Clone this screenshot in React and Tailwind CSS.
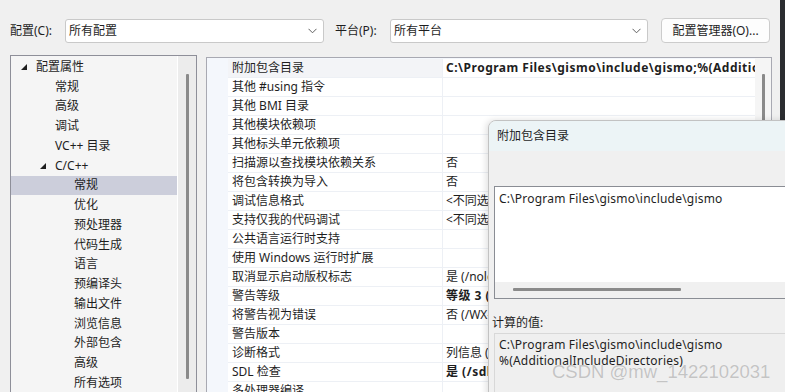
import React from "react";

const tree = [
  { label: "配置属性", level: 0, arrow: true },
  { label: "常规", level: 1 },
  { label: "高级", level: 1 },
  { label: "调试", level: 1 },
  { label: "VC++ 目录", level: 1 },
  { label: "C/C++", level: 1, arrow: true },
  { label: "常规", level: 2, selected: true },
  { label: "优化", level: 2 },
  { label: "预处理器", level: 2 },
  { label: "代码生成", level: 2 },
  { label: "语言", level: 2 },
  { label: "预编译头", level: 2 },
  { label: "输出文件", level: 2 },
  { label: "浏览信息", level: 2 },
  { label: "外部包含", level: 2 },
  { label: "高级", level: 2 },
  { label: "所有选项", level: 2 },
];

const rows = [
  { name: "附加包含目录", value: "C:\\Program Files\\gismo\\include\\gismo;%(AdditionalIncludeDirectories)", bold: true },
  { name: "其他 #using 指令", value: "" },
  { name: "其他 BMI 目录", value: "" },
  { name: "其他模块依赖项", value: "" },
  { name: "其他标头单元依赖项", value: "" },
  { name: "扫描源以查找模块依赖关系", value: "否" },
  { name: "将包含转换为导入", value: "否" },
  { name: "调试信息格式", value: "<不同选项>" },
  { name: "支持仅我的代码调试", value: "<不同选项>" },
  { name: "公共语言运行时支持", value: "" },
  { name: "使用 Windows 运行时扩展", value: "" },
  { name: "取消显示启动版权标志", value: "是 (/nologo)" },
  { name: "警告等级", value: "等级 3 (/W3)", bold: true },
  { name: "将警告视为错误", value: "否 (/WX-)" },
  { name: "警告版本", value: "" },
  { name: "诊断格式", value: "列信息 (/diagnostics:column)" },
  { name: "SDL 检查", value: "是 (/sdl)", bold: true },
  { name: "多处理器编译", value: "" },
];

const Chevron = () => (
  <svg width="9" height="6" viewBox="0 0 9 6" className="mr-[6px]">
    <polyline points="0.5,0.8 4.5,4.8 8.5,0.8" fill="none" stroke="#606060" strokeWidth="1" />
  </svg>
);

const Arrow = () => (
  <svg width="6" height="6" viewBox="0 0 6 6">
    <polygon points="6,0 6,6 0,6" fill="#1e1e1e" />
  </svg>
);

const Combo = ({ text, width }) => (
  <div
    className={`${width} h-[24px] bg-white border border-[#c9c9c9] rounded-[3px] flex items-center justify-between pl-[3px]`}
  >
    <span>{text}</span>
    <Chevron />
  </div>
);

export default function App() {
  return (
    <div className="relative w-[785px] h-[392px] overflow-hidden bg-[#f0f0f0] text-[12px] leading-[16px] text-[#1e1e1e] font-['Noto_Sans','Noto_Sans_CJK_SC',sans-serif]">
      {/* toolbar */}
      <div className="flex items-center pt-[18px] pl-[10px]">
        <span className="w-[55px]">配置(C):</span>
        <Combo text="所有配置" width="w-[259px]" />
        <span className="ml-[11px] w-[55px]">平台(P):</span>
        <Combo text="所有平台" width="w-[258px]" />
        <button className="ml-[13px] w-[109px] h-[25px] bg-[#fdfdfd] border border-[#cccccc] rounded-[4px] text-[12px]">
          配置管理器(O)...
        </button>
      </div>

      <div className="flex items-start mt-[12px] pl-[10px]">
        {/* tree */}
        <div className="w-[187px] h-[345px] shrink-0 border border-[#8e8f99] bg-[#f5f5f5] flex">
          <div className="w-[166px] shrink-0 pt-[1px]">
            {tree.map((t, i) => (
              <div
                key={i}
                className={`h-[19.75px] flex items-center ${t.selected ? "bg-[#cccedb]" : ""}`}
              >
                <div
                  className={`flex items-center ${
                    t.level === 0 ? "pl-[10px]" : t.level === 1 ? "pl-[29px]" : "pl-[63px]"
                  }`}
                >
                  {t.arrow && (
                    <span className="w-[15px] flex items-center">
                      <Arrow />
                    </span>
                  )}
                  {!t.arrow && t.level === 1 && <span className="w-[15px]" />}
                  <span>{t.label}</span>
                </div>
              </div>
            ))}
          </div>
          <div className="w-[1px] shrink-0 bg-white" />
          <div className="flex-1 bg-[#ececec] flex justify-center pt-[18px]">
            <div className="w-[3px] h-[305px] bg-[#8a8a8a] rounded-[1px]" />
          </div>
        </div>

        {/* property grid */}
        <div className="ml-[9px] mt-[2px] w-[566px] h-[340px] shrink-0 border border-[#a8a9b2] bg-[#f4f7fc] flex">
          <div className="w-[548px] shrink-0 flex">
            <div className="w-[21px] shrink-0" />
            <div className="flex-1 min-w-0 pt-[1px]">
              {rows.map((r, i) => (
                <div key={i} className="h-[19px] flex border-b border-[#edf0f5] bg-white">
                  <div
                    className={`w-[215px] shrink-0 pl-[4px] flex items-center border-r border-[#edf0f5] whitespace-nowrap ${
                      i === 0 ? "bg-[#f3f4f7]" : ""
                    }`}
                  >
                    {r.name}
                  </div>
                  <div
                    className={`flex-1 min-w-0 pl-[3px] flex items-center overflow-hidden whitespace-nowrap ${
                      r.bold ? "font-bold tracking-[0.5px]" : ""
                    }`}
                  >
                    {r.value}
                  </div>
                </div>
              ))}
            </div>
          </div>
          <div className="flex-1 bg-[#f5f5f5] flex justify-center pt-[16px]">
            <div className="w-[3px] h-[300px] bg-[#8a8a8a] rounded-[1px]" />
          </div>
        </div>
      </div>

      {/* window behind at right edge */}
      <div className="absolute right-0 top-0 w-[5px] h-[120px] bg-[#2b2d30]" />

      {/* dialog */}
      <div className="absolute left-[488px] top-[120px] w-[310px] h-[290px] rounded-tl-[8px] border border-[#c2c2c2] bg-[#f0f0f0] overflow-hidden shadow-[-2px_0_6px_rgba(0,0,0,0.12)]">
        <div className="h-[30px] bg-[#ecf4f6] flex items-center pl-[8px]">附加包含目录</div>
        <div className="ml-[5px] mt-[35px] h-[113px] bg-white border border-[#8a8d94] flex flex-col">
          <div className="flex-1 pl-[4px] pt-[4px] tracking-[0.2px]">C:\Program Files\gismo\include\gismo</div>
          <div className="h-[16px] bg-[#f0f0f0] pl-[18px] pt-[6px]">
            <div className="w-[168px] h-[3px] bg-[#8a8a8a] rounded-[1px]" />
          </div>
        </div>
        <div className="ml-[3px] mt-[17px] h-[14px] flex items-center">计算的值:</div>
        <div className="ml-[5px] mt-[3px] h-[80px] bg-[#efefef] border border-[#d8d8d8] pl-[4px] pt-[3px] tracking-[0.2px]">
          <div>C:\Program Files\gismo\include\gismo</div>
          <div>%(AdditionalIncludeDirectories)</div>
        </div>
      </div>

      {/* watermark */}
      <div className="absolute left-[552px] top-[361px] text-[18.5px] leading-[22px] text-[#c4c4c4] font-['Liberation_Sans',sans-serif] [text-shadow:0_0_1px_#ffffff]">
        CSDN @mw_1422102031
      </div>
    </div>
  );
}
